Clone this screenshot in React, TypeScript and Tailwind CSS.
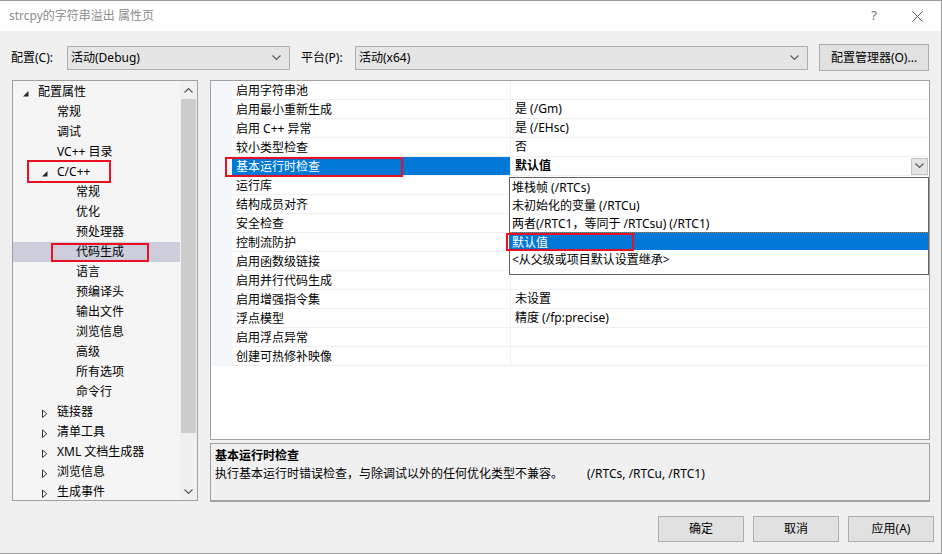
import React from "react";

const font = "[font-family:'Noto_Sans','Noto_Sans_CJK_SC',sans-serif]";

function Chevron({ up = false }: { up?: boolean }) {
  return (
    <svg width="9" height="6" viewBox="0 0 9 6" className="shrink-0">
      <path
        d={up ? "M0.5 5.5 L4.5 1.5 L8.5 5.5" : "M0.5 0.5 L4.5 4.5 L8.5 0.5"}
        fill="none"
        stroke="#5a5a5a"
        strokeWidth="1.2"
      />
    </svg>
  );
}

function Select({ value, className }: { value: string; className: string }) {
  return (
    <div
      className={
        "flex items-center justify-between h-[24px] bg-[#e5e5e5] border border-[#adadad] pl-[3px] pr-[8px] " +
        className
      }
    >
      <span>{value}</span>
      <Chevron />
    </div>
  );
}

type TreeItem = {
  label: string;
  level: 0 | 1 | 2;
  tri?: "open" | "closed";
  selected?: boolean;
  mark?: boolean;
};

const treeItems: TreeItem[] = [
  { label: "配置属性", level: 0, tri: "open" },
  { label: "常规", level: 1 },
  { label: "调试", level: 1 },
  { label: "VC++ 目录", level: 1 },
  { label: "C/C++", level: 1, tri: "open", mark: true },
  { label: "常规", level: 2 },
  { label: "优化", level: 2 },
  { label: "预处理器", level: 2 },
  { label: "代码生成", level: 2, selected: true, mark: true },
  { label: "语言", level: 2 },
  { label: "预编译头", level: 2 },
  { label: "输出文件", level: 2 },
  { label: "浏览信息", level: 2 },
  { label: "高级", level: 2 },
  { label: "所有选项", level: 2 },
  { label: "命令行", level: 2 },
  { label: "链接器", level: 1, tri: "closed" },
  { label: "清单工具", level: 1, tri: "closed" },
  { label: "XML 文档生成器", level: 1, tri: "closed" },
  { label: "浏览信息", level: 1, tri: "closed" },
  { label: "生成事件", level: 1, tri: "closed" },
];

const indent = { 0: "pl-[10px]", 1: "pl-[29px]", 2: "pl-[48px]" };

function Triangle({ kind }: { kind?: "open" | "closed" }) {
  return (
    <svg width="15" height="20" viewBox="0 0 15 20" className="shrink-0">
      {kind === "open" && <path d="M5.5 9 L5.5 14.5 L0 14.5 Z" fill="#262626" />}
      {kind === "closed" && (
        <path d="M0.5 8 L0.5 15.5 L4.8 11.75 Z" fill="none" stroke="#333" strokeWidth="1" />
      )}
    </svg>
  );
}

function Tree() {
  return (
    <div className="flex w-[186px] h-[421px] bg-[#f5f5f5] border border-[#a0a0a0]">
      <div className="flex-1 overflow-hidden pt-[1px]">
        {treeItems.map((it, i) => (
          <div
            key={i}
            className={
              "relative flex items-center h-[20px] " +
              indent[it.level] +
              (it.selected ? " bg-[#cccedb]" : "")
            }
          >
            <Triangle kind={it.tri} />
            <span className="leading-[20px]">{it.label}</span>
            {it.mark && it.level === 1 && (
              <div className="absolute left-[14px] top-[-2px] w-[84px] h-[23px] border-2 border-[#e81123]" />
            )}
            {it.mark && it.level === 2 && (
              <div className="absolute left-[38px] top-[1px] w-[98px] h-[19px] border-2 border-[#e81123]" />
            )}
          </div>
        ))}
      </div>
      <div className="flex flex-col w-[17px] bg-[#f0f0f0]">
        <div className="flex items-center justify-center h-[18px]">
          <Chevron up />
        </div>
        <div className="mx-[1px] h-[334px] bg-[#cdcdcd]" />
        <div className="flex-1" />
        <div className="flex items-center justify-center h-[17px]">
          <Chevron />
        </div>
      </div>
    </div>
  );
}

const rows: [string, string][] = [
  ["启用字符串池", ""],
  ["启用最小重新生成", "是 (/Gm)"],
  ["启用 C++ 异常", "是 (/EHsc)"],
  ["较小类型检查", "否"],
  ["基本运行时检查", "默认值"],
  ["运行库", ""],
  ["结构成员对齐", ""],
  ["安全检查", ""],
  ["控制流防护", ""],
  ["启用函数级链接", ""],
  ["启用并行代码生成", ""],
  ["启用增强指令集", "未设置"],
  ["浮点模型", "精度 (/fp:precise)"],
  ["启用浮点异常", ""],
  ["创建可热修补映像", ""],
];

const options = [
  "堆栈帧 (/RTCs)",
  "未初始化的变量 (/RTCu)",
  "两者(/RTC1，等同于 /RTCsu) (/RTC1)",
  "默认值",
  "<从父级或项目默认设置继承>",
];

function Grid() {
  return (
    <div className="relative h-[360px] bg-white border border-[#a0a0a0]">
      {rows.map(([name, value], i) => {
        const sel = i === 4;
        return (
          <div key={i} className="flex h-[19px]">
            <div className="relative w-[21px] bg-[#f3f6fb]">
              {sel && (
                <div className="absolute left-[14px] top-[0px] w-[178px] h-[20px] border-2 border-[#e81123] z-10" />
              )}
            </div>
            <div
              className={
                "w-[278px] pl-[4px] leading-[20px] border-b border-[#f0f0f0] " +
                (sel ? "bg-[#0078d7] text-white border-[#0078d7]" : "")
              }
            >
              {name}
            </div>
            <div className="flex-1 flex items-center justify-between pl-[4px] pr-[1px] border-b border-l border-[#f0f0f0]">
              <span className={"leading-[20px] " + (sel ? "font-bold" : "")}>{value}</span>
              {sel && (
                <div className="flex items-center justify-center w-[17px] h-[17px] bg-[#e5e5e5] border border-[#c4c4c4]">
                  <Chevron />
                </div>
              )}
            </div>
          </div>
        );
      })}
      <div className="absolute left-[298px] top-[96px] w-[420px] h-[98px] bg-white border border-[#646464] z-20">
        {options.map((o, i) => (
          <div
            key={i}
            className={
              "relative h-[18px] pl-[2px] leading-[20px] " +
              (i === 3 ? "bg-[#0078d7] text-white border-t border-dotted border-[#c08030]" : "")
            }
          >
            {o}
            {i === 3 && (
              <div className="absolute left-[-4px] top-[0px] w-[128px] h-[18px] border-2 border-[#e81123]" />
            )}
          </div>
        ))}
      </div>
    </div>
  );
}

function Button({ label }: { label: string }) {
  return (
    <div className="flex items-center justify-center w-[86px] h-[26px] bg-[#e1e1e1] border border-[#adadad]">
      {label}
    </div>
  );
}

export default function App() {
  return (
    <div
      className={
        "w-[942px] h-[554px] flex flex-col bg-[#f0f0f0] text-[12px] text-black border-t border-r border-b border-[#9a9a9a] overflow-hidden " +
        font
      }
    >
      <div className="flex items-center h-[30px] bg-white pl-[9px]">
        <span className="text-[#8c8c8c] text-[12px]">strcpy的字符串溢出 属性页</span>
        <span className="ml-auto text-[#707070] text-[13px] mr-[35px]">?</span>
        <svg width="11" height="11" viewBox="0 0 11 11" className="mr-[18px]">
          <path d="M0.5 0.5 L10.5 10.5 M10.5 0.5 L0.5 10.5" stroke="#555" strokeWidth="1" />
        </svg>
      </div>

      <div className="flex items-center mt-[13px] h-[27px]">
        <span className="ml-[11px] w-[56px]">配置(C):</span>
        <Select value="活动(Debug)" className="w-[223px]" />
        <span className="ml-[11px] w-[54px]">平台(P):</span>
        <Select value="活动(x64)" className="w-[453px]" />
        <div className="ml-[11px] flex items-center justify-center w-[110px] h-[27px] bg-[#e1e1e1] border border-[#adadad]">
          配置管理器(O)...
        </div>
      </div>

      <div className="flex mt-[9px] ml-[12px] gap-[12px]">
        <Tree />
        <div className="flex flex-col w-[720px] gap-[3px]">
          <Grid />
          <div className="h-[59px] border border-[#a0a0a0] border-b-2 px-[4px] pt-[3px]">
            <div className="font-bold leading-[18px]">基本运行时检查</div>
            <div className="leading-[18px]">
              执行基本运行时错误检查，与除调试以外的任何优化类型不兼容。
              <span className="ml-[24px]">(/RTCs, /RTCu, /RTC1)</span>
            </div>
          </div>
        </div>
      </div>

      <div className="flex justify-end gap-[9px] mt-[14px] mr-[7px]">
        <Button label="确定" />
        <Button label="取消" />
        <Button label="应用(A)" />
      </div>
    </div>
  );
}
